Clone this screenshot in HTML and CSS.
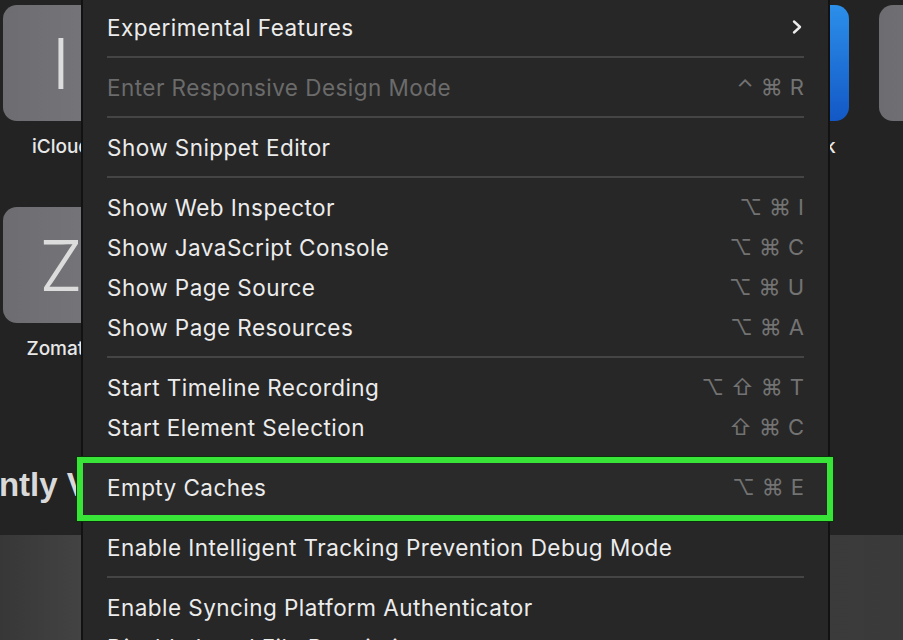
FILE: index.html
```html
<!DOCTYPE html>
<html lang="en">
<head>
    <meta charset="UTF-8">
    <meta name="viewport" content="width=device-width, initial-scale=1.0">
    <title>Develop Menu</title>
    <link rel="stylesheet" href="styles.css">
</head>
<body>
    <div class="page">
        <div class="favorites">
            <div class="fav">
                <div class="tile">I</div>
                <div class="fav-label">iCloud</div>
            </div>
            <div class="fav"><div class="tile">G</div><div class="fav-label">Google</div></div>
            <div class="fav"><div class="tile">Y</div><div class="fav-label">Yahoo</div></div>
            <div class="fav"><div class="tile">B</div><div class="fav-label">Bing</div></div>
            <div class="fav"><div class="tile">W</div><div class="fav-label">Wikipedia</div></div>
            <div class="fav">
                <div class="tile tile-blue"></div>
                <div class="fav-label">Facebook</div>
            </div>
            <div class="fav"><div class="tile"></div><div class="fav-label">Twitter</div></div>

            <div class="fav">
                <div class="tile">Z</div>
                <div class="fav-label">Zomato</div>
            </div>
            <div class="fav"><div class="tile">A</div><div class="fav-label">Apple</div></div>
        </div>

        <h2 class="section-title">Recently Visited</h2>
        <div class="recent"></div>
    </div>

    <!-- Develop menu -->
    <div class="menu">
        <div class="item">
            <span>Experimental Features</span>
            <svg class="chevron" width="12" height="16" viewBox="0 0 12 16">
                <path d="M3 2.5 L9 8 L3 13.5" fill="none" stroke="#ececec" stroke-width="2.4" stroke-linecap="round" stroke-linejoin="round"/>
            </svg>
        </div>
        <div class="sep"></div>
        <div class="item disabled">
            <span>Enter Responsive Design Mode</span>
            <span class="keys"><b>⌃</b><b>⌘</b><b>R</b></span>
        </div>
        <div class="sep"></div>
        <div class="item"><span>Show Snippet Editor</span></div>
        <div class="sep"></div>
        <div class="item">
            <span>Show Web Inspector</span>
            <span class="keys"><b>⌥</b><b>⌘</b><b>I</b></span>
        </div>
        <div class="item">
            <span>Show JavaScript Console</span>
            <span class="keys"><b>⌥</b><b>⌘</b><b>C</b></span>
        </div>
        <div class="item">
            <span>Show Page Source</span>
            <span class="keys"><b>⌥</b><b>⌘</b><b>U</b></span>
        </div>
        <div class="item">
            <span>Show Page Resources</span>
            <span class="keys"><b>⌥</b><b>⌘</b><b>A</b></span>
        </div>
        <div class="sep"></div>
        <div class="item">
            <span>Start Timeline Recording</span>
            <span class="keys"><b>⌥</b><b>⇧</b><b>⌘</b><b>T</b></span>
        </div>
        <div class="item">
            <span>Start Element Selection</span>
            <span class="keys"><b>⇧</b><b>⌘</b><b>C</b></span>
        </div>
        <div class="sep"></div>
        <div class="item highlighted">
            <span>Empty Caches</span>
            <span class="keys"><b>⌥</b><b>⌘</b><b>E</b></span>
        </div>
        <div class="sep"></div>
        <div class="item"><span>Enable Intelligent Tracking Prevention Debug Mode</span></div>
        <div class="sep"></div>
        <div class="item"><span>Enable Syncing Platform Authenticator</span></div>
        <div class="item"><span>Disable Local File Restrictions</span></div>
    </div>
</body>
</html>
```

FILE: styles.css
```css
html, body {
    margin: 0;
    height: 640px;
    overflow: hidden;
}
body {
    background-color: #232323;
    font-family: Inter, "DejaVu Sans", sans-serif;
    color: #ececec;
    position: relative;
}
.page {
    display: flex;
    flex-direction: column;
    height: 640px;
}
.favorites {
    display: grid;
    grid-template-columns: repeat(7, 116px);
    column-gap: 30px;
    row-gap: 49px;
    padding: 5px 0 0 3px;
}
.fav {
    display: flex;
    flex-direction: column;
    align-items: center;
}
.tile {
    width: 116px;
    height: 116px;
    border-radius: 14px;
    background: linear-gradient(90deg, #6c6c71, #77777c);
    color: #dcdcdc;
    font-size: 70px;
    font-weight: 300;
    display: flex;
    align-items: center;
    justify-content: center;
}
.tile-blue {
    background: linear-gradient(180deg, #2c8fea, #1358c6);
}
.fav-label {
    margin-top: 15px;
    line-height: 22px;
    font-size: 19px;
    font-weight: 500;
    color: #e8e8e8;
    white-space: nowrap;
}
.section-title {
    margin: 102px 0 27px -80px;
    font-family: "Liberation Sans", Arial, sans-serif;
    font-size: 33px;
    line-height: 46px;
    font-weight: 700;
    color: #d9d9d9;
    white-space: nowrap;
}
.recent {
    flex: 1;
    background: linear-gradient(90deg, #373737, #434343 9%, #3a3a3a);
}

/* menu lies over the page */
.menu {
    position: absolute;
    left: 81px;
    top: 0;
    width: 749px;
    height: 640px;
    box-sizing: border-box;
    padding: 7px 24px 0;
    background-color: #272727;
    border-left: 2px solid #121212;
    border-right: 2px solid #121212;
}
.item {
    position: relative;
    height: 40px;
    display: flex;
    align-items: center;
    justify-content: space-between;
    font-size: 22.5px;
    letter-spacing: 0.45px;
    white-space: nowrap;
}
.item.disabled {
    color: #6b6b6b;
}
.sep {
    height: 2px;
    margin: 9px 0;
    background-color: #454545;
}
.chevron {
    margin-right: 1px;
}
.keys {
    display: flex;
    gap: 7px;
    color: #737373;
    font-size: 22px;
    letter-spacing: 0;
}
.keys b {
    font-weight: 400;
}
.highlighted::before {
    content: "";
    position: absolute;
    left: -30px;
    right: -29px;
    top: -10px;
    bottom: -14px;
    border: 6px solid #37e437;
    box-shadow: 0 0 0 1px #0c300c;
    background-color: #2a2a2a;
    z-index: -1;
}
.highlighted {
    z-index: 1;
}
```
